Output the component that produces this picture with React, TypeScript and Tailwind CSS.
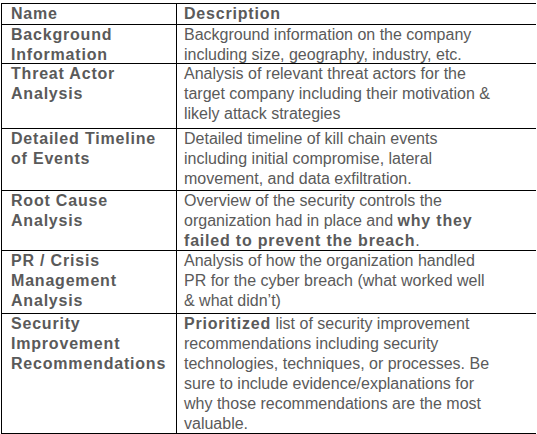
import type { ReactNode } from "react"

interface Row {
  name: string[]
  desc: ReactNode[]
  h: string
}

// bold text in the reference renders a bit wider than Liberation Sans Bold
const B = ({ children }: { children: ReactNode }) => <b className="tracking-[0.8px]">{children}</b>

const rows: Row[] = [
  {
    name: ["Background", "Information"],
    desc: ["Background information on the company", "including size, geography, industry, etc."],
    h: "h-[39px]",
  },
  {
    name: ["Threat Actor", "Analysis"],
    desc: [
      "Analysis of relevant threat actors for the",
      "target company including their motivation &",
      "likely attack strategies",
    ],
    h: "h-[65px]",
  },
  {
    name: ["Detailed Timeline", "of Events"],
    desc: [
      "Detailed timeline of kill chain events",
      "including initial compromise, lateral",
      "movement, and data exfiltration.",
    ],
    h: "h-[62px]",
  },
  {
    name: ["Root Cause", "Analysis"],
    desc: [
      "Overview of the security controls the",
      <>
        organization had in place and <B>why they</B>
      </>,
      <>
        <B>failed to prevent the breach</B>.
      </>,
    ],
    h: "h-[60px]",
  },
  {
    name: ["PR / Crisis", "Management", "Analysis"],
    desc: [
      "Analysis of how the organization handled",
      "PR for the cyber breach (what worked well",
      "& what didn’t)",
    ],
    h: "h-[63px]",
  },
  {
    name: ["Security", "Improvement", "Recommendations"],
    desc: [
      <>
        <B>Prioritized</B> list of security improvement
      </>,
      "recommendations including security",
      "technologies, techniques, or processes. Be",
      "sure to include evidence/explanations for",
      "why those recommendations are the most",
      "valuable.",
    ],
    h: "h-[120px]",
  },
]

export default function App() {
  return (
    <div className="w-[537px] h-[434px] bg-white pt-[3px] pl-[1px] font-['Liberation_Sans',Arial,sans-serif] text-[16px] leading-[20px] text-[#5a5a5a]">
      <div className="w-[535px] border-t border-b border-l border-black">
        {/* header */}
        <div className="grid grid-cols-[175px_1fr] h-[20px] font-bold tracking-[0.8px]">
          <div className="border-r border-black pl-[9px] leading-[19px]">Name</div>
          <div className="pl-[7px] leading-[19px]">Description</div>
        </div>
        {rows.map((r, i) => (
          <div key={i} className={`grid grid-cols-[175px_1fr] border-t border-black ${r.h}`}>
            <div className="border-r border-black pl-[9px] font-bold tracking-[0.8px]">
              {r.name.map((n, j) => (
                <div key={j} className="whitespace-nowrap">
                  {n}
                </div>
              ))}
            </div>
            <div className="pl-[7px]">
              {r.desc.map((d, j) => (
                <div key={j} className="whitespace-nowrap">
                  {d}
                </div>
              ))}
            </div>
          </div>
        ))}
      </div>
    </div>
  )
}
